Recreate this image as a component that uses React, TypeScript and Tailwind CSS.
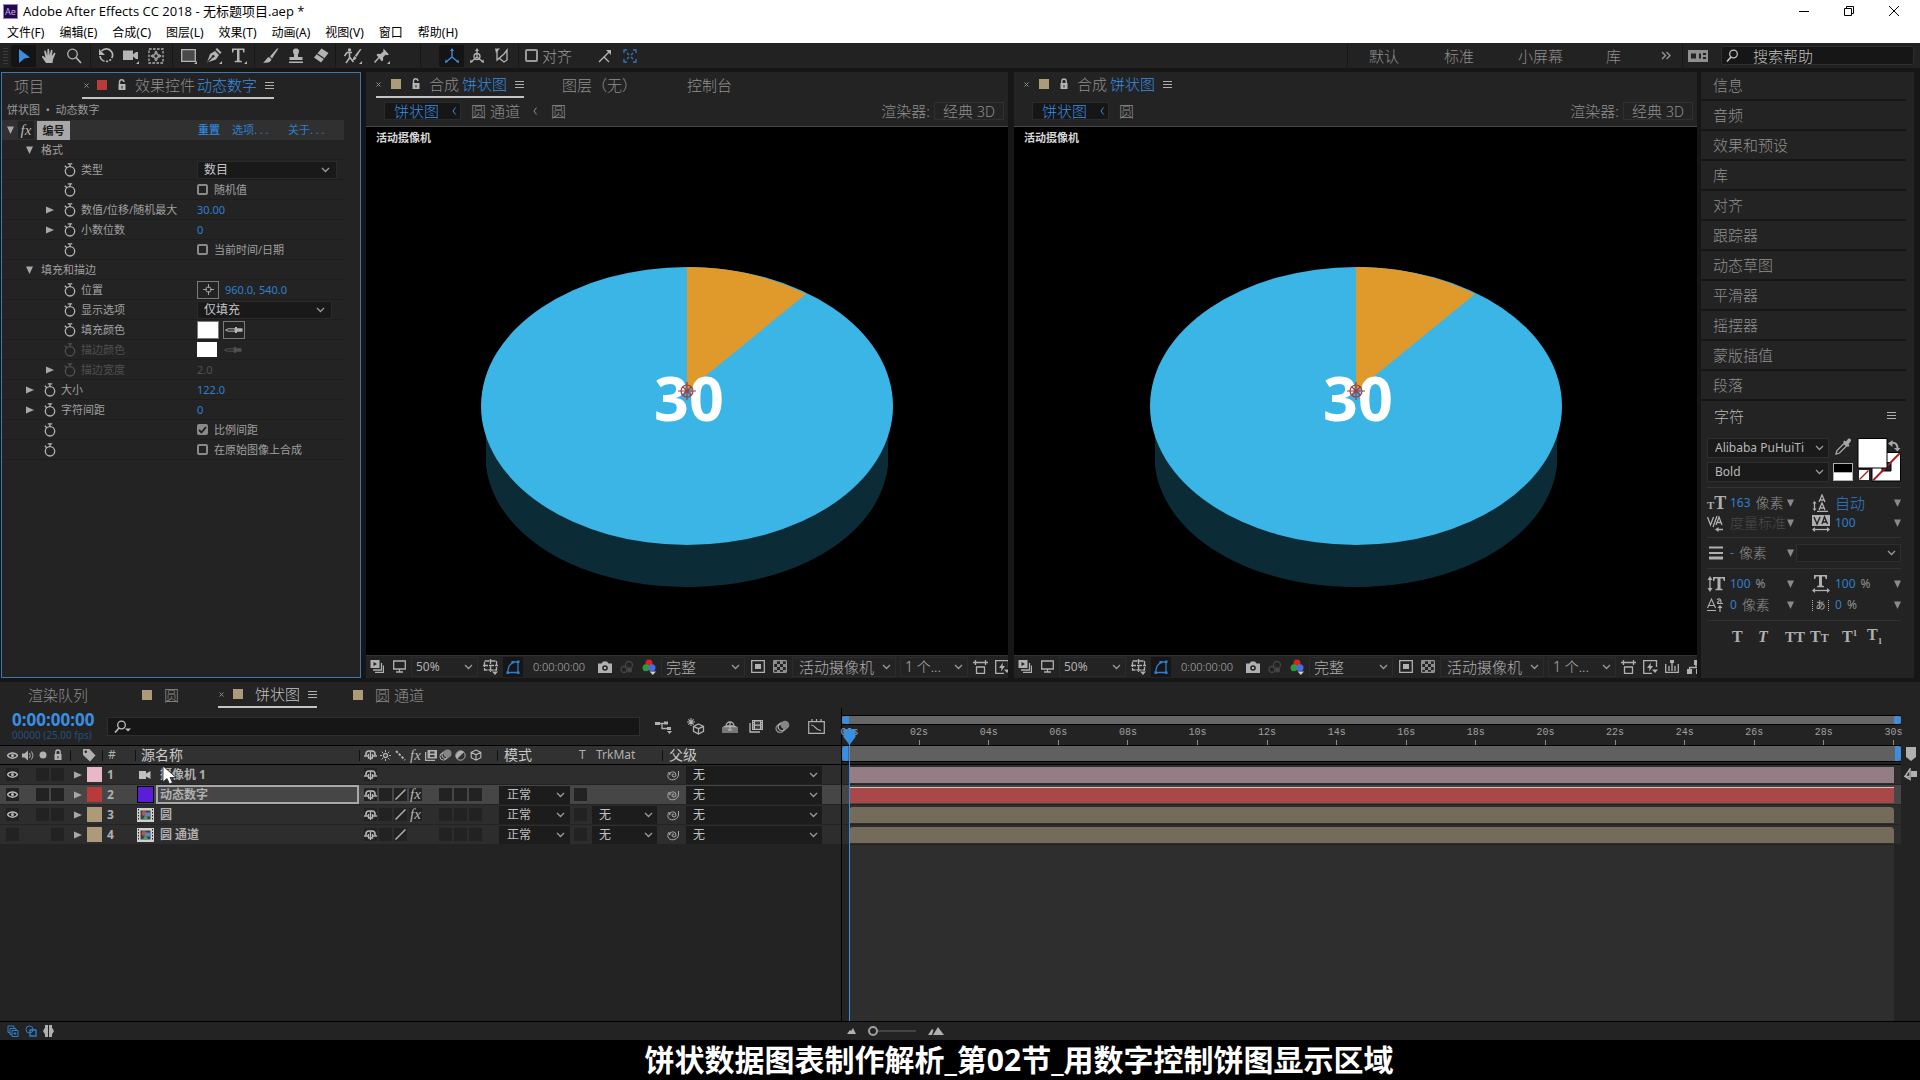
import React from 'react';

interface SvgProps {
  w?: number;
  h?: number;
  box?: string;
  className?: string;
  children: React.ReactNode;
}

// Filled shapes take currentColor, outlines set their own stroke
const Svg: React.FC<SvgProps> = ({ w = 16, h = 16, box, className = '', children }) => (
  <svg width={w} height={h} viewBox={box ?? `0 0 ${w} ${h}`} fill="currentColor" className={`shrink-0 ${className}`} aria-hidden="true">
    {children}
  </svg>
);

const line = { fill: 'none', stroke: 'currentColor', strokeWidth: 1.3 };

const Chevron = () => (
  <Svg w={9} h={6} className="text-[#9a9a9a]"><path d="M1 1l3.5 3.5L8 1" {...line} /></Svg>
);
const Menu = () => (
  <Svg w={9} h={9} className="text-[#b0b0b0]"><path d="M0 1.5h9M0 4.5h9M0 7.5h9" {...line} strokeWidth={1} /></Svg>
);
const Cross = () => (
  <Svg w={5} h={5} className="text-[#8a8a8a]"><path d="M0.5 0.5l4 4M4.5 0.5l-4 4" {...line} strokeWidth={1} /></Svg>
);
const Down = ({ className = 'text-[#a8a8a8]' }) => (
  <Svg w={7} h={8} className={className}><path d="M0 0.5h7L3.5 8z" /></Svg>
);
const Right = ({ className = 'text-[#a8a8a8]' }) => (
  <Svg w={8} h={8} className={className}><path d="M0 0.5v7L8 4z" /></Svg>
);
const Lock = ({ open = false }) => (
  <Svg w={8} h={12} className="text-[#b4b4b4]">
    <path d={open ? 'M1.5 5V3a2.2 2.2 0 0 1 4.4 0' : 'M1.8 6V3.2a2.2 2.2 0 0 1 4.4 0V6'} {...line} strokeWidth={1.4} />
    <path d="M0.5 5h7v6h-7z" />
    <path d="M3.5 7h1v2.5h-1z" fill="#222" />
  </Svg>
);
const Stopwatch = ({ dim = false }) => (
  <Svg w={12} h={14} className={dim ? 'text-[#505050]' : 'text-[#b4b4b4]'}>
    <circle cx="6" cy="8.3" r="4.7" {...line} />
    <path d="M3.8 0.8h4.4M6 1v3M0.8 2.8l2 2" {...line} />
  </Svg>
);
const Pipette = ({ dim = false }) => (
  <Svg w={18} h={8} className={dim ? 'text-[#505050]' : 'text-[#b4b4b4]'}>
    <path d="M0.5 4.2L3 2.8h7v2.4H3z" {...line} strokeWidth={1} />
    <path d="M10 1h2v1.2h5.5v3.6H12V7h-2z" />
  </Svg>
);
const Loupe = ({ arrow = false }) => (
  <Svg w={17} h={14} className="text-[#c0c0c0]">
    <circle cx="7.5" cy="5" r="3.8" {...line} />
    <path d="M5 8L1 12.5" {...line} strokeWidth={1.6} />
    {arrow && <path d="M11 8.5h6l-3 3z" />}
  </Svg>
);
const Shy = () => (
  <Svg w={13} h={12} className="text-[#b8b8b8]">
    <path d="M2 6.5V5a3 3 0 0 1 3-3h3a3 3 0 0 1 3 3v1.5" {...line} strokeWidth={1.6} />
    <path d="M0 7h4.5M8.500 7H13M6.500 2v9M4.500 5v4h4V5" {...line} />
  </Svg>
);
const Blur = () => (
  <Svg w={15} h={13} className="text-[#8c8c8c]">
    <circle cx="5" cy="8.5" r="4" {...line} />
    <circle cx="7.2" cy="6.8" r="4" {...line} stroke="#b0b0b0" />
    <circle cx="10" cy="5" r="4.3" fill="#858585" />
  </Svg>
);
const Cube = () => (
  <Svg w={12} h={12} className="text-[#b8b8b8]"><path d="M6 1l4.8 2.3v5.4L6 11.2 1.2 8.7V3.3zM1.2 3.3L6 5.8l4.8-2.5M6 5.8v5.4" {...line} strokeWidth={1.1} /></Svg>
);
const Film = () => (
  <Svg w={14} h={13} className="text-[#b8b8b8]">
    <path d="M1 3v9h10" {...line} />
    <path d="M3 0h11v10H3z" />
    <path d="M6 1.5h5v3H6zM6 5.8h5v3H6z" fill="#3c3c3c" />
    <path d="M4.4 1v8.5M12.6 1v8.5" stroke="#3c3c3c" strokeWidth="1" strokeDasharray="1 1.2" />
  </Svg>
);
const Fx = () => <span className="font-['Liberation_Serif',serif] text-[15px] italic leading-none text-[#b8b8b8]">fx</span>;
const Swatch = ({ className = 'bg-[#ad9a78]' }) => <span className={`size-[10px] shrink-0 ${className}`} />;

interface PickProps {
  label: string;
  options: string[];
  className?: string;
}

const Pick: React.FC<PickProps> = ({ label, options, className = '' }) => (
  <label className={`flex shrink-0 items-center ${className}`}>
    <select aria-label={label} className="min-w-0 flex-1 appearance-none bg-transparent leading-4 outline-none">
      {options.map((o) => <option key={o}>{o}</option>)}
    </select>
    <Chevron />
  </label>
);

const Check = ({ on = false, children }: { on?: boolean; children?: React.ReactNode }) => (
  <label className="flex items-center gap-[6px]">
    <span className="grid place-items-center">
      <input
        type="checkbox"
        defaultChecked={on}
        className="size-[11px] appearance-none rounded-xs border-2 border-[#8a8a8a] checked:bg-[#8a8a8a] [grid-area:1/1]"
      />
      {on && <Svg w={9} h={8} className="pointer-events-none text-[#1c1c1c] [grid-area:1/1]"><path d="M1 4l2.5 2.5L8 1" {...line} strokeWidth={1.8} /></Svg>}
    </span>
    {children}
  </label>
);

/* ---------- window frame ---------- */

const menus = ['文件(F)', '编辑(E)', '合成(C)', '图层(L)', '效果(T)', '动画(A)', '视图(V)', '窗口', '帮助(H)'];

const TitleBar = () => (
  <header className="bg-white text-black">
    <div className="flex h-[22px] items-center pl-[3px]">
      <span className="flex size-[15px] items-center justify-center border border-[#9a7fd0] bg-[#1f0a45] text-[9px] leading-none text-[#c9a4ff]">Ae</span>
      <h1 className="ml-[5px] flex-1 font-['Open_Sans','Noto_Sans_CJK_SC',sans-serif] text-[13px] font-normal">Adobe After Effects CC 2018 - 无标题项目.aep *</h1>
      <button aria-label="最小化" className="flex w-[45px] justify-center"><Svg w={10} h={10}><path d="M0 5.5h10" {...line} strokeWidth={1} /></Svg></button>
      <button aria-label="还原" className="flex w-[45px] justify-center"><Svg w={10} h={10}><path d="M0.5 2.5h7v7h-7zM2.5 2V0.5h7v7H8" {...line} strokeWidth={1} /></Svg></button>
      <button aria-label="关闭" className="mr-1 flex w-[45px] justify-center"><Svg w={10} h={10}><path d="M0 0l10 10M10 0L0 10" {...line} strokeWidth={1} /></Svg></button>
    </div>
    <nav className="flex h-[21px] items-center gap-[15px] pl-[7px] text-[12px]">
      {menus.map((m) => <button key={m}>{m}</button>)}
    </nav>
  </header>
);

const Corner = () => <path d="M16 13v3h-3z" />;
const Sep = ({ className = '' }) => <span className={`h-[23px] w-px shrink-0 bg-[#161616] ${className}`} />;

const Tool = ({ label, active = false, children }: { label: string; active?: boolean; children: React.ReactNode }) => (
  <button
    aria-label={label}
    className={active ? 'flex h-[22px] w-[25px] shrink-0 items-center justify-center rounded-xs bg-[#141414] text-[#3a8ee0]' : 'flex h-[22px] w-[25px] shrink-0 items-center justify-center'}
  >
    {children}
  </button>
);

const Toolbar = () => (
  <div className="flex h-[25px] items-center bg-[#222] text-[#b4b4b4]">
    <span className="mx-[3px] h-4 w-[5px] bg-[repeating-linear-gradient(#3a3a3a_0_1px,#222_1px_3px)]" />
    <Tool label="选取工具" active><Svg><path d="M3 1l11 8.5-5.5 1L3 15z" /></Svg></Tool>
    <Tool label="手形工具"><Svg><path d="M5 15L1.2 9.5c-.8-1.3.7-2 1.500-1.200L4.500 10 3.200 3.600c-.2-1.300 1.400-1.500 1.700-.3L6.200 7.500 6.400 1.600c0-1.300 1.700-1.300 1.800 0L8.600 7.400l1.200-4.800c.3-1.200 1.900-.9 1.700.3l-.7 5.200 2-2.900c.7-.9 2-.1 1.500.9L12 11.500 11.500 15z" /></Svg></Tool>
    <Tool label="缩放工具"><Svg><circle cx="6.5" cy="6" r="4.8" {...line} /><path d="M10 9.5l5 5.5" {...line} strokeWidth={1.8} /></Svg></Tool>
    <Sep className="ml-1 mr-[2px]" />
    <Tool label="旋转工具"><Svg><path d="M3.5 3A6.3 6.3 0 1 1 2 8" {...line} strokeWidth={1.7} strokeDasharray="18 1.5 2 1.5 2 1.5" /><path d="M1 1v6h6z" /></Svg></Tool>
    <Tool label="摄像机工具"><Svg><path d="M0 2.500h10v4l3-2.500h2v7h-2l-3-2.500V12H0z" /><Corner /></Svg></Tool>
    <Tool label="向后平移工具">
      <Svg>
        <path d="M1 1h14v14H1z" {...line} strokeDasharray="2.6 1.4" />
        <circle cx="8" cy="8" r="2.3" {...line} />
        <path d="M8 2.5l2 2.3H6zM8 13.5l2-2.3H6zM2.5 8l2.3-2v4zM13.5 8l-2.3-2v4z" />
      </Svg>
    </Tool>
    <Sep className="ml-1 mr-[3px]" />
    <Tool label="矩形工具"><Svg><path d="M0.7 1.7h13.6v11.6H.7z" {...line} fill="#4a4a4a" /><Corner /></Svg></Tool>
    <Tool label="钢笔工具"><Svg><path d="M1 14.500L4 6l5-3 4 4-3 4.500z" /><path d="M9.500 1.500L11 0l4.500 4.500L14 6z" /><path d="M1.500 14l5-5" stroke="#222" strokeWidth="1.1" /><circle cx="7.2" cy="8.3" r="1.3" fill="#222" /><Corner /></Svg></Tool>
    <Tool label="文字工具"><Svg><path d="M1 0.500h12.500v4H12.300L11.700 2H8.500v10.500l2.300.5v1.200H3.700V13l2.300-.5V2H2.800L2.200 4.500H1z" /><Corner /></Svg></Tool>
    <Sep className="mx-[3px]" />
    <Tool label="画笔工具"><Svg><path d="M15.500 0.500L9 10.500 7 8.500 14 .5zM6 9l2.500 2.500C8 14 4 15.500 0 14.500 3 13.500 3 10 6 9z" /></Svg></Tool>
    <Tool label="仿制图章工具"><Svg><path d="M6 6.500C4 3 5 .5 8 .5S12 3 10 6.500V9h4.500v3h-13V9H6zM1 13.500h14V15H1z" /></Svg></Tool>
    <Tool label="橡皮擦工具"><Svg><path d="M8.500 0.500L15.500 5 8 14.500 1 9.500z" /><path d="M4 5.800l7 4.800" stroke="#222" strokeWidth="1.200" /></Svg></Tool>
    <Sep className="ml-[2px] mr-1" />
    <Tool label="Roto 笔刷工具"><Svg w={18} h={16}><circle cx="5.500" cy="2" r="1.700" /><path d="M0.500 8L3 4.500h5M5.500 5v5L2 15M5.500 9l4 5" {...line} strokeWidth={1.600} /><path d="M17.500 1l-5 8-1.600-1.500L16 1zM10.500 8l2 2c-1 2-3 2.500-4.500 2 1.500-.8 1-3 2.500-4zM18 13v3h-3z" /></Svg></Tool>
    <span className="w-1 shrink-0" />
    <Tool label="操控点工具"><Svg><path d="M9.500 0.500l5.500 6-2 .7-1.500-.4-2.500 2.700.2 2.800-1.500 1L2.500 7l1.200-1.300 2.800.3L9.300 3.500z" /><path d="M5 9.500L0.500 14.500" {...line} strokeWidth={1.500} /><Corner /></Svg></Tool>
    <Sep className="ml-[26px] mr-[18px]" />
    <Tool label="本地轴模式" active><Svg><path d="M8 2v7L2.500 13.500M8 9l5.500 4.500" {...line} strokeWidth={1.400} /><path d="M8 0l2 3H6zM1 15l.5-3.500L4 14zM15 15l-.5-3.500L12 14z" /></Svg></Tool>
    <Tool label="世界轴模式"><Svg><circle cx="8" cy="8.500" r="3" {...line} /><path d="M8 2v7L2.500 13.500M8 9l5.500 4.500" {...line} /><path d="M8 0l2 3H6zM1 15l.5-3.500L4 14zM15 15l-.5-3.500L12 14z" /></Svg></Tool>
    <Tool label="视图轴模式"><Svg w={14} h={16}><path d="M2 2v10l7-6 3-4v10l-3 2-5-4" {...line} /><path d="M0 0.500h5L1 5z" /></Svg></Tool>
    <Sep className="ml-1 mr-[6px]" />
    <label className="flex items-center gap-1 text-[15px] font-light text-[#9a9a9a]">
      <input type="checkbox" className="size-[13px] appearance-none rounded-xs border-2 border-[#9a9a9a]" />
      对齐
    </label>
    <span className="w-5" />
    <Tool label="对齐边缘"><Svg><path d="M2 14l5-5 5 5M7 9l6-6" {...line} /><path d="M9 2h5v5z" /></Svg></Tool>
    <Tool label="对齐特征"><Svg w={14} h={14} className="text-[#2f78bd]"><path d="M1 4V1h3M10 1h3v3M13 10v3h-3M4 13H1v-3M4 4l2 2M10 4L8 6M4 10l2-2M10 10L8 8" {...line} /></Svg></Tool>
    <div className="ml-auto mr-[6px] flex items-center text-[15px] font-light text-[#8f8f8f]">
      <Sep className="mr-[21px]" />
      <button className="w-[75px] text-left">默认</button>
      <button className="w-[74px] text-left">标准</button>
      <button className="w-[88px] text-left">小屏幕</button>
      <button className="w-[55px] text-left">库</button>
      <Svg w={10} h={9}><path d="M1 1l3.500 3.500L1 8M5.500 1L9 4.500 5.500 8" {...line} strokeWidth={1.500} /></Svg>
      <Sep className="ml-[11px] mr-[5px]" />
      <Svg w={20} h={12}><path d="M0 0h20v12H0z" /><path d="M3 3.500h5v5H3zM11 3.500h2v5h-2zM15 3h3v2h-3zM15 7h3v2h-3z" fill="#222" /></Svg>
      <div className="ml-[13px] flex h-[19px] w-[193px] items-center gap-[10px] rounded-xs border border-[#2e2e2e] bg-[#161616] pl-1">
        <Loupe />
        <input aria-label="搜索帮助" placeholder="搜索帮助" className="w-32 bg-transparent font-light outline-none placeholder:text-[#c0c0c0]" />
      </div>
    </div>
  </div>
);

/* ---------- effect controls ---------- */

interface EffectRow {
  label?: string;
  depth: number;
  arrow?: 'down' | 'right';
  watch?: boolean;
  dim?: boolean;
  control?: React.ReactNode;
}

const value = (v: string) => <span className="text-[#2f7fce]">{v}</span>;

const effectRows: EffectRow[] = [
  { label: '格式', depth: 0, arrow: 'down' },
  { label: '类型', depth: 1, watch: true, control: <Pick label="类型" options={['数目']} className="h-[18px] w-[140px] border border-[#2a2a2a] bg-[#191919] px-[6px] text-[12px] text-[#c4c4c4]" /> },
  { depth: 1, watch: true, control: <Check>随机值</Check> },
  { label: '数值/位移/随机最大', depth: 1, arrow: 'right', watch: true, control: value('30.00') },
  { label: '小数位数', depth: 1, arrow: 'right', watch: true, control: value('0') },
  { depth: 1, watch: true, control: <Check>当前时间/日期</Check> },
  { label: '填充和描边', depth: 0, arrow: 'down' },
  {
    label: '位置', depth: 1, watch: true, control: (
      <>
        <button aria-label="拾取位置" className="mr-[6px] flex h-[18px] w-[22px] items-center justify-center border border-[#7a7a7a]">
          <Svg w={11} h={11}><circle cx="5.5" cy="5.5" r="2.700" {...line} strokeWidth={1} /><path d="M5.500 0v4M5.500 7v4M0 5.500h4M7 5.500h4" {...line} strokeWidth={1} /></Svg>
        </button>
        {value('960.0, 540.0')}
      </>
    ),
  },
  { label: '显示选项', depth: 1, watch: true, control: <Pick label="显示选项" options={['仅填充']} className="h-[18px] w-[135px] border border-[#2a2a2a] bg-[#191919] px-[6px] text-[12px] text-[#c4c4c4]" /> },
  {
    label: '填充颜色', depth: 1, watch: true, control: (
      <>
        <button aria-label="填充颜色" className="mr-1 h-[18px] w-[22px] border border-[#7a7a7a] bg-white" />
        <button aria-label="吸管" className="flex h-[18px] w-[22px] items-center justify-center border border-[#7a7a7a]"><Pipette /></button>
      </>
    ),
  },
  {
    label: '描边颜色', depth: 1, watch: true, dim: true, control: (
      <>
        <button aria-label="描边颜色" className="mr-[7px] h-[15px] w-[20px] bg-white" />
        <Pipette dim />
      </>
    ),
  },
  { label: '描边宽度', depth: 1, arrow: 'right', watch: true, dim: true, control: <span>2.0</span> },
  { label: '大小', depth: 0, arrow: 'right', watch: true, control: value('122.0') },
  { label: '字符间距', depth: 0, arrow: 'right', watch: true, control: value('0') },
  { depth: 0, watch: true, control: <Check on>比例间距</Check> },
  { depth: 0, watch: true, control: <Check>在原始图像上合成</Check> },
];

const EffectPanel = () => (
  <section className="w-[360px] shrink-0 border border-[#3f77ad] bg-[#232323]">
    <div className="flex h-[26px] pl-3 text-[15px] font-light text-[#8f8f8f]">
      <button className="w-[68px] text-left">项目</button>
      <div className="flex items-center border-b-2 border-[#c4c4c4] pl-[2px]">
        <Cross />
        <Swatch className="ml-2 mr-[11px] bg-[#b83a3a]" />
        <Lock open />
        <span className="ml-[9px]">效果控件</span>
        <span className="ml-[2px] mr-2 text-[#3a8ee0]">动态数字</span>
        <Menu />
      </div>
    </div>
    <div className="flex h-[21px] items-center pl-[5px] text-[11px] text-[#9a9a9a]">饼状图&nbsp; •&nbsp; 动态数字</div>
    <div className="mr-[16px] text-[11px] text-[#a0a0a0]">
      <div className="flex h-[20px] items-center bg-[#303030] pl-[5px] text-[#2f7fce]">
        <Down />
        <span className="ml-1 mr-[3px] flex h-[18px] w-[16px] items-center justify-center bg-[#222]"><Fx /></span>
        <b className="h-[19px] w-[33px] bg-[#a8a8a8] text-center leading-[19px] text-[#1c1c1c]">编号</b>
        <button className="ml-[128px] w-[34px] text-left font-bold">重置</button>
        <button className="w-[56px] text-left">选项. . .</button>
        <button>关于. . .</button>
      </div>
      {effectRows.map((row, i) => (
        <div key={i} className={`flex h-[20px] items-center border-b border-[#1d1d1d] ${row.dim ? 'text-[#505050]' : ''}`}>
          <div className={`flex w-[195px] items-center ${row.depth ? 'pl-[44px]' : 'pl-[24px]'}`}>
            <span className={row.watch ? 'w-[18px]' : 'w-[15px]'}>
              {row.arrow === 'down' && <Down />}
              {row.arrow === 'right' && <Right />}
            </span>
            {row.watch && <Stopwatch dim={row.dim} />}
            <span className={row.watch ? 'ml-[5px] whitespace-nowrap' : ''}>{row.label}</span>
          </div>
          {row.control}
        </div>
      ))}
    </div>
  </section>
);

/* ---------- composition viewers ---------- */

const FootIcon = ({ label, children }: { label: string; children: React.ReactNode }) => (
  <button aria-label={label} className="flex w-[22px] shrink-0 items-center justify-center">{children}</button>
);

const ViewerFooter = () => (
  <div className="flex h-[23px] items-center overflow-hidden border-t border-[#333] bg-[#232323] pb-px text-[#b0b0b0]">
    <FootIcon label="始终预览"><Svg w={14} h={13}><path d="M0.500 0h9v8h-9z" /><path d="M3.500 2v4l3.500-2z" fill="#222" /><path d="M3 10h8.500V3M5 12.400h8.500V5.500" {...line} /></Svg></FootIcon>
    <FootIcon label="主查看器"><Svg w={13} h={13}><path d="M0.700 1h11.600v8H.7zM3 12h7M6.500 9v3" {...line} /></Svg></FootIcon>
    <Pick label="放大率" options={['50%']} className="ml-px h-5 w-[67px] border border-[#2c2c2c] px-1 text-[12px]" />
    <span className="w-px shrink-0" />
    <FootIcon label="网格和参考线"><Svg w={15} h={16}><path d="M1.500 2h12v9h-12z M7.500 0v13M0 6.500h15" {...line} strokeDasharray="5 1" /><path d="M9 12.500h6L12 16z" /></Svg></FootIcon>
    <button aria-label="蒙版可见性" className="ml-[2px] flex h-5 w-5 shrink-0 items-center justify-center bg-[#161616]"><Svg w={14} h={14} className="text-[#2f7fce]"><path d="M1.500 12.500L3 6l4-4h5v10.500z" {...line} /><path d="M0.500 11.500h2.500v2.500H.5zM11 11.500h2.500v2.500H11zM11 0.500h2.500v2.500H11zM5.500 1h2.500v2.500H5.500z" /></Svg></button>
    <span className="ml-px w-[70px] shrink-0 text-center text-[11px] font-light">0:00:00:00</span>
    <FootIcon label="拍摄快照"><Svg w={14} h={12}><path d="M0 2.500h3.500L5 .5h4l1.500 2H14V12H0z" /><circle cx="7" cy="7" r="2.800" fill="#222" /><circle cx="7" cy="7" r="1.300" /></Svg></FootIcon>
    <FootIcon label="显示快照"><Svg w={14} h={14} className="text-[#444]"><circle cx="4" cy="9.500" r="3" {...line} /><circle cx="9" cy="5" r="3.500" {...line} /><circle cx="9.500" cy="10" r="2.500" /></Svg></FootIcon>
    <FootIcon label="显示通道"><Svg w={14} h={16}><circle cx="7" cy="4" r="3.500" fill="#d22" /><circle cx="4" cy="8.800" r="3.500" fill="#2a9a3a" /><circle cx="10" cy="8.800" r="3.500" fill="#4a6ae0" /><path d="M7.500 12.500h6.500L10.800 16z" fill="#ccc" /></Svg></FootIcon>
    <Pick label="分辨率" options={['完整']} className="ml-px h-5 w-[84px] border border-[#2c2c2c] px-1 text-[15px] font-light" />
    <span className="w-[2px] shrink-0" />
    <FootIcon label="目标区域"><Svg w={14} h={13}><path d="M0.700 0.700h12.600v11.600H.7z" {...line} /><path d="M4 4h6v5H4z" /></Svg></FootIcon>
    <FootIcon label="透明网格"><Svg w={14} h={13}><path d="M0.700 0.700h12.600v11.600H.7z" {...line} strokeWidth={1} /><path d="M1 1h3v3H1zM7 1h3v3H7zM4 4h3v3H4zM10 4h3v3h-3zM1 7h3v3H1zM7 7h3v3H7zM4 10h3v2H4zM10 10h3v2h-3z" fill="#8a8a8a" /></Svg></FootIcon>
    <Pick label="3D 视图" options={['活动摄像机']} className="ml-px h-5 w-[104px] border border-[#2c2c2c] pl-[6px] pr-1 text-[15px] font-light" />
    <Pick label="视图布局" options={['1 个...']} className="ml-1 h-5 w-[68px] border border-[#2c2c2c] px-1 text-[14px] font-light" />
    <span className="w-px shrink-0" />
    <FootIcon label="像素长宽比校正"><Svg w={15} h={14}><path d="M0 2.500h15M2.500 0v5M12.500 0v5M3.500 7h8v6.300h-8z" {...line} /></Svg></FootIcon>
    <FootIcon label="快速预览"><Svg w={15} h={14}><path d="M13.500 7V0.700H.7v12.600H9" {...line} /><path d="M8 2.500L4 8h2.500L6 11.500 10 6H7.500zM9 9.500h6l-3 3.500z" /></Svg></FootIcon>
    <FootIcon label="时间轴"><Svg w={14} h={14}><path d="M0.700 4v8.300h12.600V4M4 6v5M7 3v8M10 6v5" {...line} /><path d="M5 0h4v3H5z" /></Svg></FootIcon>
    <FootIcon label="合成流程图"><Svg w={14} h={14}><path d="M7 0h5v5H7zM0 9h5v5H0zM9 9h5v5H9z" /><path d="M9 5v2.500M2.500 9V7.500h9V9" {...line} /></Svg></FootIcon>
  </div>
);

const PieChart = () => (
  <svg viewBox="0 -10 420 340" width="420" height="340" className="shrink-0" role="img" aria-label="饼图 30">
    <path d="M9 165v31c9 71 95 121 201 121s192-50 201-121v-31z" fill="#0b2c37" />
    <ellipse cx="210" cy="136" rx="206" ry="139" fill="#3ab5e6" />
    <path d="M210 121V-3c44 0 85 10 119 27z" fill="#e09a2c" />
    <text x="212" y="151" textAnchor="middle" fontSize="61" fontWeight="700" fill="#fff">30</text>
    <g fill="none" stroke="#a33c3c" strokeWidth="1.200">
      <circle cx="210" cy="121" r="6" />
      <path d="M201 121h18M210 112v18M206 117l8 8M214 117l-8 8" />
    </g>
  </svg>
);

interface ViewerProps {
  locked?: boolean;
  crumbs: string[];
  tabs?: string[];
  className: string;
}

const Viewer: React.FC<ViewerProps> = ({ locked = false, crumbs, tabs = [], className }) => (
  <section className={`flex min-w-0 basis-0 flex-col bg-[#232323] ${className}`}>
    <div className="flex h-[26px] pl-[10px] text-[15px] font-light text-[#8f8f8f]">
      <div className={`mr-[38px] flex items-center border-b-2 ${locked ? 'border-transparent' : 'border-[#c4c4c4]'}`}>
        <Cross />
        <Swatch className="ml-[10px] mr-[11px] bg-[#ad9a78]" />
        <Lock open={!locked} />
        <span className="ml-[9px]">合成</span>
        <span className="ml-[3px] mr-2 text-[#3a8ee0]">饼状图</span>
        <Menu />
      </div>
      {tabs.map((t) => <button key={t} className="mr-[50px]">{t}</button>)}
    </div>
    <div className="flex h-[28px] items-center pb-[3px] pl-[18px] pr-1 text-[15px] font-light text-[#8f8f8f]">
      <button className="flex h-[18px] w-[77px] items-center justify-between border border-[#2a2a2a] bg-[#161616] pl-[9px] pr-1 text-[#3a8ee0]">
        饼状图
        <Svg w={4} h={8}><path d="M3.500 0.500L1 4l2.500 3.500" {...line} strokeWidth={1} /></Svg>
      </button>
      {crumbs.map((c, i) => (
        <React.Fragment key={c}>
          {i > 0 && <Svg w={4} h={8} className="ml-[13px] mr-1"><path d="M3.500 0.500L1 4l2.500 3.500" {...line} strokeWidth={1} /></Svg>}
          <button className="ml-[10px]">{c}</button>
        </React.Fragment>
      ))}
      <span className="ml-auto mr-1">渲染器:</span>
      <button className="h-[18px] w-[70px] border border-[#303030] leading-4">经典 <span className="text-[14px]">3D</span></button>
    </div>
    <div className="relative flex flex-1 justify-center overflow-hidden border-t border-[#4a4a4a] bg-black pt-[133px]">
      <span className="absolute left-[10px] top-[3px] text-[11px] font-bold text-[#d8d8d8]">活动摄像机</span>
      <PieChart />
    </div>
    <ViewerFooter />
  </section>
);

/* ---------- right dock ---------- */

const closedPanels = ['信息', '音频', '效果和预设', '库', '对齐', '跟踪器', '动态草图', '平滑器', '摇摆器', '蒙版插值', '段落'];

interface MetricProps {
  icon: React.ReactNode;
  num?: string;
  unit?: string;
  dim?: boolean;
}

const Metric: React.FC<MetricProps> = ({ icon, num, unit, dim }) => (
  <div className="flex items-center text-[12px] text-[#2f7fce]">
    <span className="flex w-[23px] shrink-0 text-[#b0b0b0]">{icon}</span>
    <span className="flex flex-1 items-center gap-[5px] whitespace-nowrap">
      {num === '自动' ? <span className="text-[15px] font-light">{num}</span> : num}
      {unit && <span className={dim ? 'text-[14px] font-light text-[#4a4a4a]' : unit === '%' ? 'text-[#8f8f8f]' : 'text-[14px] font-light text-[#8f8f8f]'}>{unit}</span>}
    </span>
    <Down className="text-[#8a8a8a]" />
  </div>
);

const Glyph = ({ children, className = 'text-[16px]' }: { children: React.ReactNode; className?: string }) => (
  <span className={`font-['Liberation_Serif',serif] font-bold leading-none text-[#b0b0b0] ${className}`}>{children}</span>
);

const Rule = () => <hr className="border-[#333]" />;

const CharacterPanel = () => (
  <div className="pl-[6px] pr-[13px]">
    <div className="flex h-[29px] items-center justify-between pl-[7px] pr-[5px] text-[15px] font-light text-[#b8b8b8]">
      字符
      <Menu />
    </div>
    <div className="flex pb-[5px] pt-2">
      <div className="flex flex-col gap-1 text-[12px] text-[#b8b8b8]">
        <Pick label="字体系列" options={['Alibaba PuHuiTi']} className="h-5 w-[122px] border border-[#2e2e2e] bg-[#1a1a1a] pl-[7px] pr-1" />
        <Pick label="字体样式" options={['Bold']} className="h-5 w-[122px] border border-[#2e2e2e] bg-[#1a1a1a] pl-[7px] pr-1" />
      </div>
      <div className="ml-1 flex flex-col items-center gap-[7px]">
        <Svg w={18} h={18} className="text-[#a8a8a8]"><path d="M2 16l1-3.500L10 5.500l2.500 2.500L5.500 15z" {...line} /><path d="M9 4l1.500-1.500 1.500 1L14 1c2-1.500 4 .8 2.500 2.800L14.500 6l1 1.500L14 9z" /></Svg>
        <button aria-label="黑白" className="flex h-[18px] w-5 flex-col border border-[#b0b0b0] bg-black"><span className="mt-auto h-2 w-full border-t border-[#b0b0b0] bg-white" /></button>
      </div>
      <Svg w={46} h={44} className="ml-1">
        <path d="M15 14.500h28.500V43H15z" fill="#fff" stroke="#000" />
        <path d="M25 24.500h9V33h-9z" fill="#222" stroke="#000" />
        <path d="M16 42.500L43 15" stroke="#9c2020" strokeWidth="1.800" />
        <path d="M1 0.500h29V30H1z" fill="#fff" stroke="#000" />
        <path d="M2 32h10v10H2z" fill="#fff" />
        <path d="M2.500 41.500l9-9" stroke="#9c2020" strokeWidth="1.200" />
        <path d="M34 5c5-1 7 2 6.500 7" fill="none" stroke="#a8a8a8" strokeWidth="2" />
        <path d="M31 5.500l4.500-3.500v7zM37 10h6.500L40.500 13.500z" fill="#a8a8a8" />
      </Svg>
    </div>
    <Rule />
    <div className="grid h-[49px] grid-cols-[87px_1fr] content-center gap-x-[18px] auto-rows-[20px]">
      <Metric icon={<span className="flex items-baseline"><Glyph className="text-[11px]">T</Glyph><Glyph className="text-[18px]">T</Glyph></span>} num="163" unit="像素" />
      <Metric icon={<Svg w={16} h={18}><path d="M7 8l3-7 3 7M8 6h4M7 16l3-7 3 7M8 14h4M2.500 8v8M5 17.500h11" {...line} /><path d="M0.500 9.500L2.500 7l2 2.500zM.5 14.500l2 2.500 2-2.500z" /></Svg>} num="自动" />
      <Metric icon={<Svg w={17} h={18}><path d="M0.500 3l3 8 3-8M10 2L6 13M9 11l3-8 3 8M10 8.500h4M10 15.500h6" {...line} /><path d="M8 15.500l3.500-2.500v5z" /></Svg>} unit="度量标准" dim />
      <Metric icon={<Svg w={18} h={18}><path d="M0 1h18v11H0z" /><path d="M2 3l3 7 3-7M10 10l2.500-7 3 7M11 8h4" fill="none" stroke="#222" strokeWidth="1.400" /><path d="M2 15.500h14" {...line} /><path d="M0 15.500L3 13v5zM18 15.500L15 13v5z" /></Svg>} num="100" />
    </div>
    <Rule />
    <div className="grid h-[30px] grid-cols-[87px_1fr] items-center gap-x-[2px]">
      <Metric icon={<Svg w={14} h={14} className="ml-[2px]"><path d="M0 1.500h14M0 7h14" {...line} strokeWidth={1.800} /><path d="M0 10.500h14v3H0z" /></Svg>} num="-" unit="像素" />
      <Pick label="描边位置" options={['']} className="h-[18px] min-w-0 border border-[#2e2e2e] bg-[#1f1f1f] pr-1" />
    </div>
    <Rule />
    <div className="grid h-[51px] grid-cols-[87px_1fr] content-center gap-x-[18px] auto-rows-[21px]">
      <Metric icon={<Svg w={18} h={16}><path d="M3 2v12" {...line} /><path d="M0.500 4L3 0l2.500 4zM.5 12L3 16l2.500-4zM6 1h12v4h-1.200L16 2.500h-2.500v10l2 .5v1.200h-7V13l2-.5v-10H8L7.200 5H6z" /></Svg>} num="100" unit="%" />
      <Metric icon={<Svg w={18} h={18}><path d="M2 0h13v4h-1.200L13 1.500h-3v9l2 .5v1.200H5V11l2-.5v-9H4L3.200 4H2z" /><path d="M2 15.500h14" {...line} /><path d="M0 15.500L3 13v5zM18 15.500L15 13v5z" /></Svg>} num="100" unit="%" />
      <Metric icon={<Svg w={17} h={16}><path d="M0.500 11L4.500 2l4 9M2 8.500h5M0 13.500h9M10 6.500h6M13 9v6M10 2.500c3-1.500 4-.5 4 3.500M14 3.500c-4 0-4 2.500-2 2.500" {...line} strokeWidth={1.100} /><path d="M10.500 11l2.500-3 2.500 3z" /></Svg>} num="0" unit="像素" />
      <Metric icon={<span className="flex w-[17px] flex-col items-center border-x border-dotted border-[#b0b0b0] text-[10px] leading-[11px]">あ</span>} num="0" unit="%" />
    </div>
    <Rule />
    <div className="flex items-center pl-[25px] pt-[5px]">
      <button aria-label="仿粗体" className="w-[26px] text-left"><Glyph>T</Glyph></button>
      <button aria-label="仿斜体" className="w-[27px] text-left"><Glyph className="text-[16px] italic">T</Glyph></button>
      <button aria-label="全部大写" className="w-[25px] text-left"><Glyph className="text-[15px]">TT</Glyph></button>
      <button aria-label="小型大写" className="w-[32px] text-left"><Glyph>T</Glyph><Glyph className="text-[12px]">T</Glyph></button>
      <button aria-label="上标" className="w-[25px] text-left"><Glyph>T</Glyph><Glyph className="align-super text-[9px]">1</Glyph></button>
      <button aria-label="下标"><Glyph>T</Glyph><Glyph className="align-sub text-[9px]">1</Glyph></button>
    </div>
  </div>
);

const Dock = () => (
  <aside className="mr-[6px] w-[213px] shrink-0 overflow-hidden bg-[#232323]">
    {closedPanels.map((p, i) => (
      <button
        key={p}
        className={`block w-[205px] border-b-2 border-[#161616] pb-px pl-[12px] text-left text-[15px] font-light text-[#8f8f8f] ${i === 0 ? 'h-[29px]' : 'h-[30px]'}`}
      >
        {p}
      </button>
    ))}
    <CharacterPanel />
  </aside>
);

/* ---------- timeline ---------- */

interface Layer {
  id: number;
  name: string;
  color: string;
  bar: string;
  icon: 'camera' | 'solid' | 'comp';
  visible: boolean;
  selected?: boolean;
  fx?: boolean;
  trkMat?: boolean;
}

const layers: Layer[] = [
  { id: 1, name: '摄像机 1', color: 'bg-[#e8b8c8]', bar: 'bg-[#957d85]', icon: 'camera', visible: true },
  { id: 2, name: '动态数字', color: 'bg-[#b83a3a]', bar: 'border-t border-[#d8c0c0] bg-[#a84848]', icon: 'solid', visible: true, selected: true, fx: true },
  { id: 3, name: '圆', color: 'bg-[#ad9a78]', bar: 'rounded-t-sm bg-[#746b5a]', icon: 'comp', visible: true, fx: true, trkMat: true },
  { id: 4, name: '圆 通道', color: 'bg-[#ad9a78]', bar: 'rounded-t-sm bg-[#746b5a]', icon: 'comp', visible: false, trkMat: true },
];

const Eye = () => (
  <Svg w={11} h={9} className="text-[#b8b8b8]"><path d="M0.500 4.500C2.500 1 8.500 1 10.500 4.500 8.500 8 2.500 8 .5 4.500z" {...line} strokeWidth={1.500} /><circle cx="5.500" cy="4.500" r="1.500" /></Svg>
);

const Slot = ({ on = true, children }: { on?: boolean; children?: React.ReactNode }) => (
  <span className={on ? 'mr-[2px] flex size-[13px] shrink-0 items-center justify-center bg-[#222]' : 'mr-[2px] flex size-[13px] shrink-0 items-center justify-center'}>{children}</span>
);

const LayerIcon = ({ kind }: { kind: Layer['icon'] }) => {
  if (kind === 'solid') return <span className="h-[17px] w-[17px] border border-black bg-[#5a1ed8]" />;
  if (kind === 'camera') return <Svg w={17} h={12} className="text-[#c0c0c0]"><path d="M2 2h7v2.500L13.500 2v8L9 7.500V10H2z" /></Svg>;
  return (
    <Svg w={17} h={14} className="text-[#d0d0d0]">
      <path d="M0 0h17v14H0z" />
      <path d="M1.500 1v12M15.500 1v12" stroke="#222" strokeDasharray="1.500 1.500" />
      <path d="M3.500 2.500h10v9h-10z" fill="#3a4048" />
      <circle cx="7" cy="5.500" r="2.400" fill="#b05a4c" />
      <path d="M8.500 4.500h4.500v4H8.500z" fill="#5a86bc" />
      <path d="M6 11l2.500-4.500L11 11z" fill="#4a9a6a" />
    </Svg>
  );
};

const Spiral = () => (
  <Svg w={13} h={12} className="text-[#a8a8a8]"><path d="M7 6a1 1 0 0 0-2 0a2 2 0 0 0 4 0a3.200 3.200 0 0 0-6.400 0M2.600 6c0-6-2.200-1-1.600 2 1 4 9.500 4 10.500-2V2" {...line} strokeWidth={1} /></Svg>
);

const SwitchIcons = () => (
  <>
    <Slot on={false}><Shy /></Slot>
    <Slot on={false}><Svg w={11} h={11}><circle cx="5.500" cy="5.500" r="2" {...line} /><path d="M5.500 0v2M5.500 9v2M0 5.500h2M9 5.500h2M1.600 1.600L3 3M8 8l1.400 1.400M9.400 1.600L8 3M3 8L1.600 9.400" {...line} strokeWidth={1} /></Svg></Slot>
    <Slot on={false}><Svg w={11} h={11}><path d="M1 1l9 9" {...line} strokeWidth={2} strokeDasharray="2.500 1.500" /></Svg></Slot>
    <Slot on={false}><Fx /></Slot>
    <Slot on={false}><Svg w={12} h={11}><path d="M2.500 0H12v8.500H2.500z" /><path d="M5 1.500h4.500v2H5zM5 5h4.500v2H5z" fill="#3c3c3c" /><path d="M0.600 2v8.400H10" {...line} /></Svg></Slot>
    <Slot on={false}><Svg w={13} h={12}><circle cx="4.500" cy="7.500" r="3.600" {...line} strokeWidth={1} /><circle cx="6.500" cy="6" r="3.600" {...line} strokeWidth={1} /><circle cx="8.500" cy="4.500" r="4" fill="#858585" /></Svg></Slot>
    <Slot on={false}><Svg w={11} h={11}><circle cx="5.500" cy="5.500" r="4.700" {...line} strokeWidth={1} /><path d="M9 2A5 5 0 0 0 2 9z" /></Svg></Slot>
    <Slot on={false}><Cube /></Slot>
  </>
);

const headCell = 'border-y border-black p-0 font-normal';
const tick = <span className="h-[11px] w-px shrink-0 bg-[#111]" />;

const LayerTable = () => (
  <table className="w-full table-fixed border-separate border-spacing-0 text-left text-[12px] text-[#b0b0b0]">
    <colgroup>
      <col className="w-[70px]" /><col className="w-[32px]" /><col className="w-[33px]" /><col className="w-[224px]" />
      <col className="w-[138px]" /><col className="w-[75px]" /><col className="w-[19px]" /><col className="w-[71px]" /><col className="w-[165px]" /><col />
    </colgroup>
    <thead>
      <tr className="h-[20px] bg-[#313131]">
        <th className={headCell}>
          <span className="flex items-center pl-[6px]">
            <Slot on={false}><Eye /></Slot>
            <Slot on={false}><Svg w={12} h={11}><path d="M0 3.500h2.500L6 .5v10L2.500 7.500H0z" /><path d="M7.500 3q1.500 2.500 0 5M9.500 1.500q3 4 0 8" {...line} strokeWidth={1} /></Svg></Slot>
            <Slot on={false}><Svg w={8} h={8}><circle cx="4" cy="4" r="3.500" /></Svg></Slot>
            <Slot on={false}><Lock /></Slot>
          </span>
        </th>
        <th className={headCell}><span className="flex items-center gap-3">{tick}<Svg w={13} h={13}><path d="M0 0h6.500l6 6.500L7 12.500 0 6z" /><circle cx="2.800" cy="2.800" r="1.200" fill="#222" /></Svg></span></th>
        <th className={headCell}><span className="flex items-center gap-[5px]">{tick}#</span></th>
        <th className={`${headCell} text-[14px]`}><span className="flex items-center gap-[5px] text-[#c8c8c8]">{tick}源名称</span></th>
        <th className={headCell}><span className="flex items-center">{tick}<span className="w-1" /><SwitchIcons /></span></th>
        <th className={`${headCell} text-[14px]`}><span className="flex items-center gap-[6px] text-[#c8c8c8]">{tick}模式</span></th>
        <th className={headCell}><span className="pl-[7px]">T</span></th>
        <th className={headCell}><span className="pl-[5px]">TrkMat</span></th>
        <th className={`${headCell} text-[14px]`}><span className="flex items-center gap-[6px] text-[#c8c8c8]">{tick}父级</span></th>
        <th className={headCell}>{tick}</th>
      </tr>
    </thead>
    <tbody>
      {layers.map((l) => (
        <tr key={l.id} className={`h-[20px] ${l.selected ? 'bg-[#464646]' : 'bg-[#2d2d2d]'} [&>td]:border-b [&>td]:border-[#232323] [&>td]:p-0`}>
          <td>
            <span className="flex pl-[6px]">
              <Slot>{l.visible && <Eye />}</Slot>
              <Slot on={false} />
              <Slot on={l.visible} />
              <Slot />
            </span>
          </td>
          <td><span className="flex items-center justify-end gap-[5px]"><Right /><span className={`h-[15px] w-[15px] ${l.color}`} /></span></td>
          <td className="font-bold"><span className="pl-[5px]">{l.id}</span></td>
          <td>
            <span className="flex items-center gap-[2px] pl-[2px]">
              <LayerIcon kind={l.icon} />
              <span className={l.selected ? 'h-[19px] flex-1 border-2 border-[#a8a8a8] pl-[2px] font-bold leading-[15px]' : 'pl-1 font-bold'}>{l.name}</span>
            </span>
          </td>
          <td>
            <span className="flex pl-[5px]">
              <Slot><Shy /></Slot>
              {l.icon !== 'camera' && (
                <>
                  <Slot />
                  <Slot><Svg w={11} h={11}><path d="M0.500 10.500l10-10" {...line} strokeWidth={1.500} /></Svg></Slot>
                  <Slot on={l.fx ?? false}>{l.fx && <Fx />}</Slot>
                  <Slot on={false} /><Slot /><Slot /><Slot />
                </>
              )}
            </span>
          </td>
          <td>{l.icon !== 'camera' && <Pick label="模式" options={['正常']} className="ml-[2px] h-[18px] w-[71px] bg-[#1c1c1c] pl-2 pr-[5px] text-[12px] text-[#c0c0c0]" />}</td>
          <td>{l.icon !== 'camera' && <span className="ml-[2px] block size-[13px] bg-[#222]" />}</td>
          <td>{l.trkMat && <Pick label="轨道遮罩" options={['无']} className="ml-px h-[18px] w-[65px] bg-[#1c1c1c] pl-[7px] pr-1 text-[12px] text-[#c0c0c0]" />}</td>
          <td>
            <span className="flex items-center gap-[6px] pl-[5px]">
              <Spiral />
              <Pick label="父级" options={['无']} className="h-[18px] w-[136px] bg-[#1c1c1c] pl-[7px] pr-1 text-[12px] text-[#c0c0c0]" />
            </span>
          </td>
          <td />
        </tr>
      ))}
    </tbody>
  </table>
);

const seconds = ['00s', '02s', '04s', '06s', '08s', '10s', '12s', '14s', '16s', '18s', '20s', '22s', '24s', '26s', '28s', '30s'];

const Track = () => (
  <div className="relative flex min-w-0 flex-1 flex-col border-l border-black">
    <div className="mt-[7px] flex h-[10px] justify-between border-y border-black bg-[#666]">
      <span className="w-[7px] rounded-l-full bg-[#3a8ee0]" />
      <span className="w-[7px] rounded-r-full bg-[#3a8ee0]" />
    </div>
    <div className="mx-[7px] flex h-[20px] items-end justify-between font-['Liberation_Mono',monospace] text-[10px] text-[#a0a0a0]">
      {seconds.map((s) => (
        <span key={s} className="flex w-px flex-col items-center">
          <span className="leading-[14px]">{s}</span>
          <span className="h-[5px] w-px bg-[#8a8a8a]" />
        </span>
      ))}
    </div>
    <div className="h-[20px] border-b border-black">
      <div className="flex h-[17px] justify-between border-y border-black bg-[#606060]">
        <span className="w-[6px] rounded-l-sm bg-[#3a8ee0]" />
        <span className="w-[6px] rounded-r-sm bg-[#3a8ee0]" />
      </div>
    </div>
    {layers.map((l) => (
      <div key={l.id} className={`h-[20px] border-b border-[#232323] px-[7px] pb-px pt-[2px] ${l.selected ? 'bg-[#464646]' : 'bg-[#2d2d2d]'}`}>
        <div className={`h-full ${l.bar}`} />
      </div>
    ))}
    <div className="mx-[7px] flex-1 bg-[#2e2e2e]" />
    {/* playhead */}
    <div className="absolute bottom-0 left-[7px] top-[21px] w-px bg-[#3a8ee0]" />
    <Svg w={13} h={16} className="absolute left-px top-[21px] text-[#3a8ee0]"><path d="M0.500 0h12v8l-6 8-6-8z" /></Svg>
  </div>
);

const Timeline = () => (
  <section className="mt-1 flex min-h-0 grow-[358] basis-0 flex-col bg-[#232323]">
    <div className="flex h-[26px] pl-[28px] text-[15px] font-light text-[#8f8f8f]">
      <button className="w-[114px] text-left">渲染队列</button>
      <button className="flex w-[76px] items-center gap-3"><Swatch />圆</button>
      <div className="mr-9 flex items-center border-b-2 border-[#c4c4c4] pl-px text-[#c4c4c4]">
        <Cross />
        <Swatch className="ml-[9px] mr-3 bg-[#ad9a78]" />
        饼状图
        <span className="w-2" />
        <Menu />
      </div>
      <button className="flex items-center gap-3"><Swatch />圆 通道</button>
    </div>
    <div className="flex min-h-0 flex-1">
      <div className="flex w-[841px] shrink-0 flex-col">
        <div className="flex h-[37px] items-center">
          <div className="w-[107px] pl-3">
            <div className="text-[17px] font-bold leading-[18px] text-[#3a8ee0]">0:00:00:00</div>
            <div className="whitespace-nowrap text-[10px] leading-[13px] text-[#23507e]">00000 (25.00 fps)</div>
          </div>
          <div className="flex h-[19px] w-[533px] items-center gap-1 border border-[#2e2e2e] bg-[#161616] pl-[6px]">
            <Loupe arrow />
            <input aria-label="搜索图层" className="min-w-0 flex-1 bg-transparent text-[12px] outline-none" />
          </div>
          <div className="ml-[15px] flex flex-1 items-center text-[#b0b0b0]">
            <span className="w-[32px]"><Svg w={17} h={14}><path d="M0 2h5v3H0zM9 1.500h4v3H9zM12 7h4v3h-4z" /><path d="M5 3.500h4M7 3.500V8.500h5" {...line} /><path d="M12 11h5l-2.500 3z" /></Svg></span>
            <span className="w-[35px]"><Svg w={18} h={17}><path d="M4 0v8M0 4h8M1.300 1.300l5.400 5.400M6.700 1.300L1.300 6.700" {...line} strokeWidth={1.100} /><path d="M11.500 6l5 2.300v5L11.500 16l-5-2.700v-5zM6.500 8.300l5 2.400 5-2.400M11.500 10.700V16" {...line} /></Svg></span>
            <span className="w-[27px]"><Svg w={16} h={13}><path d="M0 7h16v6H0z" className="text-[#777]" /><path d="M4 6a4 4 0 0 1 8 0z" {...line} /><path d="M1.500 6.700h13M8 2v8M6 10h4" {...line} /></Svg></span>
            <span className="w-[26px]"><Film /></span>
            <span className="w-[33px]"><Blur /></span>
            <Svg w={17} h={15}><path d="M0.700 2.700h15.600v11.600H.7zM4 0v3M8.500 0v3M13 0v3M3 6c5 0 4 5.500 10 5.500" {...line} strokeWidth={1.200} /></Svg>
          </div>
        </div>
        <LayerTable />
      </div>
      <Track />
      <div className="flex w-[19px] shrink-0 flex-col items-center gap-[7px] pt-[39px] text-[#b0b0b0]">
        <Svg w={10} h={14}><path d="M0 0h10v10l-5 4-5-4z" /></Svg>
        <Svg w={13} h={13}><path d="M1 8.500L6 1v10.500L1 8.500h5" {...line} strokeWidth={1.500} /><path d="M7 3h6v6H7z" /></Svg>
      </div>
    </div>
    <div className="flex h-[19px] items-center border-t border-black pl-[7px] text-[#2f7fce]">
      <span className="w-[18px]"><Svg w={12} h={12}><path d="M3 7.500H1V1h6v2M5 9.500H3V3.500h6v2M5 5.500h6v6H5zM8 7v3M6.500 8.500h3" {...line} strokeWidth={1} /></Svg></span>
      <span className="w-[18px]"><Svg w={12} h={12}><circle cx="4.500" cy="4.500" r="3.500" {...line} strokeWidth={1} /><path d="M5 5h6v6H5z" {...line} /></Svg></span>
      <Svg w={11} h={12} className="text-[#b0b0b0]"><path d="M5 0v12H2V9.500L0 6l2-3.500V0zM6 0v12h3V9.500L11 6 9 2.500V0z" /></Svg>
      <div className="ml-[793px] flex items-center text-[#b0b0b0]">
        <Svg w={9} h={6}><path d="M0 6l3-4 1 1 2-3 3 6z" /></Svg>
        <input
          type="range"
          aria-label="时间缩放"
          min={0}
          max={100}
          defaultValue={0}
          className="mx-3 h-[2px] w-[48px] appearance-none bg-[#444] [&::-webkit-slider-thumb]:size-[10px] [&::-webkit-slider-thumb]:appearance-none [&::-webkit-slider-thumb]:rounded-full [&::-webkit-slider-thumb]:border-2 [&::-webkit-slider-thumb]:border-[#a0a0a0] [&::-webkit-slider-thumb]:bg-[#222]"
        />
        <Svg w={16} h={8}><path d="M0 8l4-6 1.500 1L4 8zM5 8l5-8 6 8z" /></Svg>
      </div>
    </div>
  </section>
);

export default function App() {
  return (
    <div className="relative flex h-screen flex-col overflow-hidden bg-[#161616] font-['Noto_Sans','Noto_Sans_CJK_SC',sans-serif] leading-4">
      <TitleBar />
      <Toolbar />
      <main className="mt-1 flex min-h-0 grow-[606] basis-0 pl-px">
        <EffectPanel />
        <div className="ml-[5px] flex min-w-0 flex-1 gap-[6px]">
          <Viewer className="grow-[642]" crumbs={['圆 通道', '圆']} tabs={['图层（无）', '控制台']} />
          <Viewer className="grow-[683]" crumbs={['圆']} locked />
        </div>
        <span className="w-1 shrink-0" />
        <Dock />
      </main>
      <Timeline />
      <footer className="flex h-10 shrink-0 items-center justify-center bg-black pl-[118px] text-[30px] font-bold leading-none text-white">
        饼状数据图表制作解析_第02节_用数字控制饼图显示区域
      </footer>
      <Svg w={15} h={20} className="absolute left-[162px] top-[765px]"><path d="M1 1v16l4-3.500 2.500 5.500 3-1.500L8 12.500h6z" fill="#fff" stroke="#222" strokeWidth="0.800" /></Svg>
    </div>
  );
}
